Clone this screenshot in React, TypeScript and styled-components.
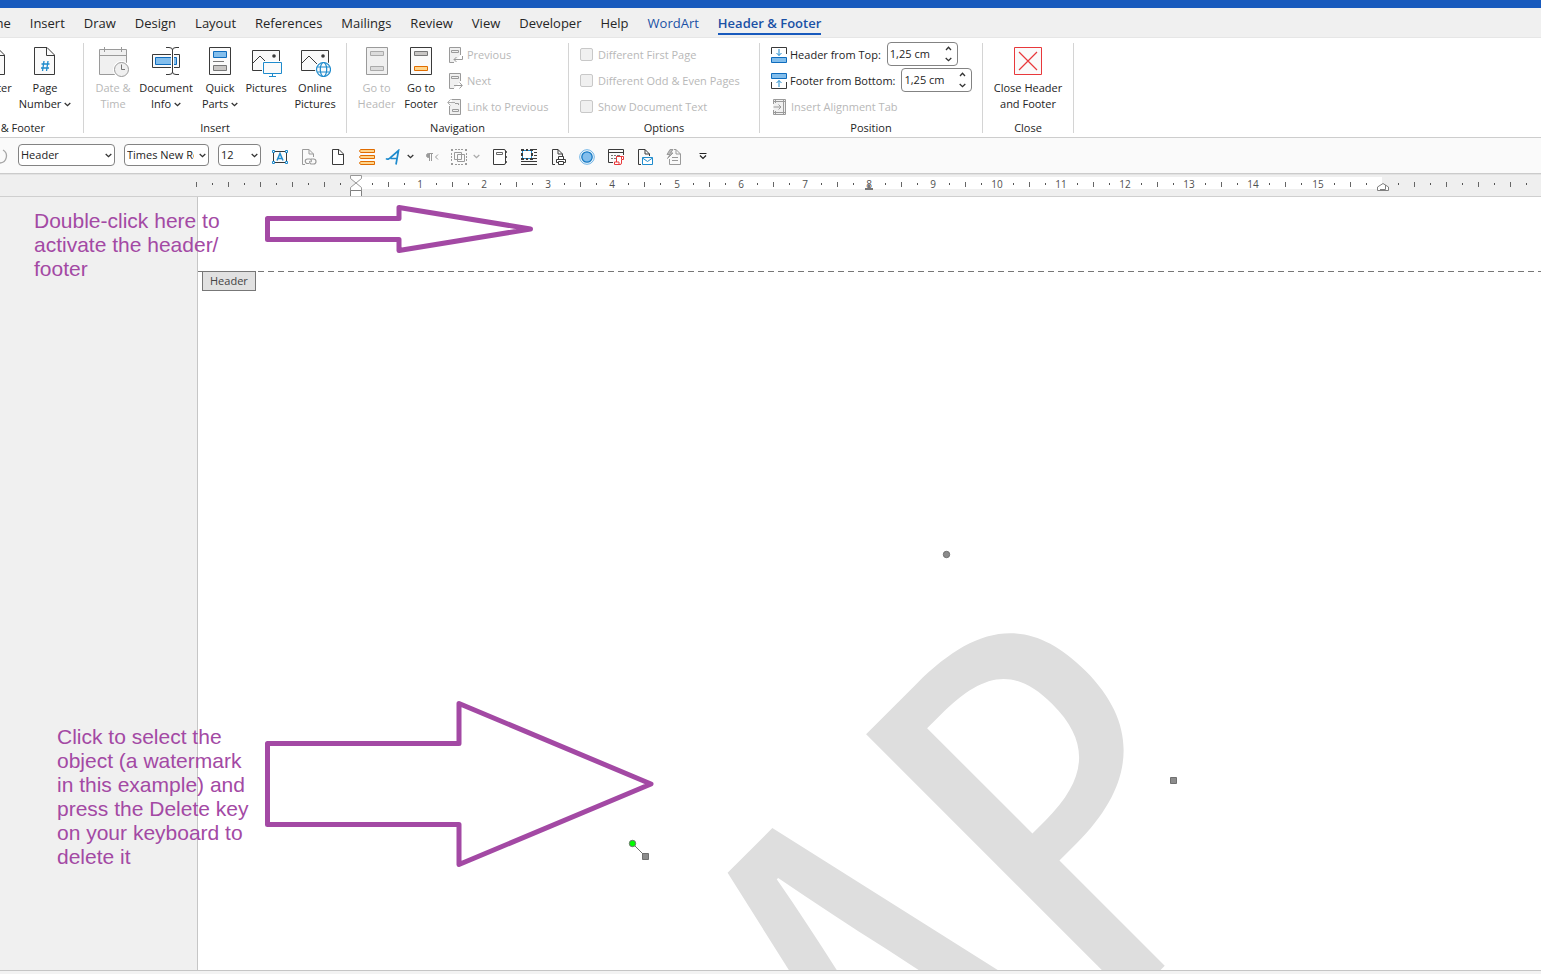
import React from 'react';
import styled, { createGlobalStyle } from 'styled-components';

const GlobalStyle = createGlobalStyle`
  *, *::before, *::after { box-sizing: border-box; }
  body { margin: 0; background: #fff; overflow: hidden; }
  button, input, select { font: inherit; color: inherit; }
  button { border: 0; padding: 0; background: none; }
`;

const Shell = styled.div`
  min-height: 100vh;
  display: flex;
  flex-direction: column;
  overflow: hidden;
  font-family: 'Open Sans', 'Noto Sans', sans-serif;
  font-size: 11px;
  line-height: 16px;
  color: #242424;
`;

const TitleBar = styled.div`
  height: 8px;
  background: #185abd;
`;

const TabStrip = styled.div`
  background: #f0f0f0;
  border-bottom: 1px solid #e6e6e6;
`;

const Tabs = styled.nav`
  display: flex;
  gap: 19px;
  height: 29px;
  margin-left: -26px;
`;

const Tab = styled.a<{ $tone?: 'accent' | 'active' }>`
  display: flex;
  flex: none;
  height: 27px;
  align-items: center;
  padding-top: 5px;
  font-size: 13px;
  white-space: nowrap;
  text-decoration: none;
  color: ${(p) => (p.$tone ? '#1a50a5' : '#262626')};
  font-weight: ${(p) => (p.$tone === 'active' ? 600 : 400)};
  border-bottom: 2px solid ${(p) => (p.$tone === 'active' ? '#185abd' : 'transparent')};
`;

const Ribbon = styled.div`
  display: flex;
  height: 100px;
  margin-left: -78px;
  padding-top: 5px;
  background: #fff;
  border-bottom: 1px solid #cdcdcd;
`;

const Group = styled.section<{ $width: number }>`
  display: flex;
  flex: none;
  flex-direction: column;
  width: ${(p) => p.$width}px;
  height: 90px;
  border-right: 1px solid #d4d4d4;
`;

const GroupBody = styled.div<{ $center?: boolean }>`
  display: flex;
  flex: none;
  justify-content: ${(p) => (p.$center ? 'center' : 'flex-start')};
  align-items: flex-start;
  height: 79px;
  padding-left: ${(p) => (p.$center ? 0 : 8)}px;
`;

const GroupName = styled.h2`
  margin: 0;
  font-size: 11px;
  line-height: 12px;
  font-weight: 400;
  text-align: center;
`;

const BigButton = styled.button<{ $width: number }>`
  display: flex;
  flex: none;
  flex-direction: column;
  align-items: center;
  width: ${(p) => p.$width}px;
  padding-top: 2px;
  white-space: nowrap;
  &:disabled { color: #b8b8b8; }
`;

const BigLabel = styled.span`
  margin-top: 3px;
  text-align: center;
  svg { vertical-align: 1px; }
`;

const Stack = styled.div`
  display: flex;
  flex: none;
  flex-direction: column;
  align-items: flex-start;
  margin: -1px 0 0 3px;
`;

const Line = styled.div`
  display: flex;
  flex: none;
  align-items: center;
  gap: 3px;
  height: 26px;
  white-space: nowrap;
`;

const SmallButton = styled.button`
  display: flex;
  flex: none;
  align-items: center;
  gap: 4px;
  height: 26px;
  white-space: nowrap;
  &:disabled { color: #b8b8b8; }
`;

const CheckLine = styled.label`
  display: flex;
  flex: none;
  align-items: center;
  gap: 5px;
  height: 26px;
  color: #b8b8b8;
  white-space: nowrap;
`;

const Check = styled.input`
  appearance: none;
  width: 13px;
  height: 13px;
  margin: 0 0 2px;
  border: 1px solid #c8c8c8;
  border-radius: 2px;
  background: #f0f0f0;
`;

const Spin = styled.span`
  display: flex;
  align-items: center;
  width: 71px;
  height: 24px;
  margin: 0 0 2px 3px;
  padding: 0 5px 0 2px;
  border: 1px solid #838383;
  border-radius: 4px;
  background: #fff;
`;

const SpinInput = styled.input`
  flex: 1;
  min-width: 0;
  border: 0;
  padding: 0;
  outline: 0;
  background: none;
`;

const SpinArrows = styled.span`
  display: flex;
  flex-direction: column;
  gap: 6px;
`;

const SpinButton = styled.button`
  display: flex;
`;

const Toolbar = styled.div`
  display: flex;
  align-items: center;
  height: 36px;
  background: #fafafa;
  border-bottom: 1px solid #cbcbcb;
`;

const Combo = styled.label<{ $width: number }>`
  position: relative;
  flex: none;
  width: ${(p) => p.$width}px;
  height: 22px;
  margin: 0 9px 2px 0;
  font-size: 11px;
`;

const ComboSelect = styled.select`
  appearance: none;
  width: 100%;
  height: 22px;
  padding: 0 14px 0 2px;
  border: 1px solid #838383;
  border-radius: 4px;
  background: #fff;
`;

const ComboArrow = styled.span`
  position: absolute;
  top: 9px;
  right: 3px;
  display: flex;
  pointer-events: none;
`;

const RedoButton = styled.button`
  display: flex;
  flex: none;
  width: 18px;
`;

const Tool = styled.button<{ $width?: number }>`
  display: flex;
  flex: none;
  align-items: center;
  justify-content: center;
  gap: 6px;
  width: ${(p) => p.$width ?? 29}px;
  height: 28px;
`;

const Tools = styled.div`
  display: flex;
  margin: 2px 0 0 -5px;
`;

const RulerBar = styled.div`
  height: 23px;
  overflow: hidden;
  background: #efefef;
  border-bottom: 1px solid #cfcfcf;
`;

const RulerText = styled.text`
  font-size: 10px;
  fill: #505050;
  text-anchor: middle;
`;

const Workspace = styled.main`
  position: relative;
  display: flex;
  flex: 1;
  overflow: hidden;
  background: #f0f0f0;
`;

const Gutter = styled.div`
  flex: none;
  width: 197px;
`;

const Page = styled.div`
  position: relative;
  flex: 1;
  overflow: hidden;
  background: #fff;
  border-left: 1px solid #c6c6c6;
`;

const HeaderArea = styled.div`
  height: 75px;
  background: repeating-linear-gradient(90deg, #777 0 6px, transparent 6px 10px) bottom left / 100% 1px no-repeat;
`;

const HeaderTag = styled.div`
  display: inline-flex;
  align-items: center;
  height: 20px;
  margin: -1px 0 0 4px;
  padding: 0 7px;
  border: 1px solid #777;
  background: #e1e1e1;
  font-size: 11px;
  color: #444;
  vertical-align: top;
`;

const Watermark = styled.div`
  position: absolute;
  left: 29px;
  top: 1032px;
  font-family: 'Noto Sans Mono CJK JP', 'Noto Sans CJK JP', sans-serif;
  font-feature-settings: 'hwid';
  font-size: 510px;
  line-height: 510px;
  white-space: nowrap;
  color: #dedede;
  transform-origin: 0 0;
  transform: rotate(-45deg);
`;

const Overlay = styled.svg`
  position: absolute;
  left: 0;
  top: 0;
  pointer-events: none;
`;

const Note = styled.p<{ $left: number; $top: number }>`
  position: absolute;
  left: ${(p) => p.$left}px;
  top: ${(p) => p.$top}px;
  margin: 0;
  font-family: 'Liberation Sans', sans-serif;
  font-size: 21px;
  line-height: 24px;
  white-space: nowrap;
  color: #a349a4;
`;

const StatusEdge = styled.footer`
  height: 4px;
  background: #f3f3f3;
  border-top: 1px solid #c6c6c6;
`;

const DARK = '#3a3a3a';
const GREY = '#9a9a9a';
const BLUE = '#1e8bcd';

const Chevron = ({ color = '#333', up = false }: { color?: string; up?: boolean }) => (
  <svg width="7" height="5" viewBox="0 0 7 5" fill="none" stroke={color} strokeWidth="1.3">
    <path d={up ? 'M1 4 3.5 1.3 6 4' : 'M.7 1 3.5 3.7 6.3 1'} />
  </svg>
);

const Icon = ({ w = 32, h = 32, children }: { w?: number; h?: number; children: React.ReactNode }) => (
  <svg width={w} height={h} viewBox={`0 0 ${w} ${h}`} fill="none" stroke={DARK}>
    {children}
  </svg>
);

const PageIcon = ({ mark }: { mark?: boolean }) => (
  <Icon>
    <path d="M5.500 2.500H18L25.500 10V29.500H5.500Z" fill="#fafafa" />
    <path d="M17.500 2.500V10.500H25.500" />
    {mark && <path d="M15 16 13.500 26M19 16 17.500 26M12.500 19H20.500M12 23H20" stroke={BLUE} strokeWidth="1.300" />}
  </Icon>
);

const CalendarIcon = () => (
  <Icon>
    <g stroke={GREY}>
      <path d="M2.500 4.500H29.500V29.500H2.500Z" fill="#f0f0f0" />
      <path d="M2.500 10.500H29.500M7.500 2V7M24.500 2V7" />
      <circle cx="24.500" cy="24.500" r="7" fill="#f0f0f0" stroke="#fff" strokeWidth="3" />
      <circle cx="24.500" cy="24.500" r="7" fill="#f0f0f0" />
      <path d="M24.500 19.500V24.500H28" stroke="#777" />
    </g>
  </Icon>
);

const DocInfoIcon = () => (
  <Icon>
    <path d="M2.500 9.500H29.500V22.500H2.500Z" fill="#fafafa" />
    <path d="M5.500 12.500H26.500V19.500H5.500Z" fill="#83beec" stroke="#0f6cbd" />
    <path d="M22.500 4V28" stroke="#fff" strokeWidth="3" />
    <path d="M16 2.500H19Q22.500 2.500 22.500 5V27Q22.500 29.500 19 29.500H16M29 2.500H26Q22.500 2.500 22.500 5M22.500 27Q22.500 29.500 26 29.500H29" />
  </Icon>
);

const QuickPartsIcon = () => (
  <Icon>
    <path d="M5.500 2.500H26.500V29.500H5.500Z" fill="#fafafa" />
    <path d="M9.500 6.500H22.500V12.500H9.500Z" fill="#83beec" stroke="#0f6cbd" />
    <path d="M9 16.500H20" stroke="#777" />
    <path d="M9.500 20.500H22.500V25.500H9.500Z" fill="#c8c6c4" stroke="#777" />
  </Icon>
);

const PictureIcon = ({ online }: { online?: boolean }) => (
  <Icon>
    <path d="M2.500 5.500H29.500V25.500H2.500Z" fill="#fafafa" />
    <path d="M2.500 18.500 10 11 19 20" />
    <circle cx="24" cy="11" r="1.800" fill={DARK} stroke="none" />
    {online ? (
      <g stroke={BLUE} strokeWidth="1.200">
        <circle cx="24.500" cy="24.500" r="8.500" fill="#fff" stroke="none" />
        <circle cx="24.500" cy="24.500" r="7" fill="#fafafa" />
        <ellipse cx="24.500" cy="24.500" rx="3.200" ry="7" />
        <path d="M18.300 22H30.700M18.300 27H30.700" />
      </g>
    ) : (
      <g stroke={BLUE}>
        <path d="M12 16H32V30H12Z" fill="#fff" stroke="none" />
        <path d="M13.500 17.500H31.500V28.500H13.500ZM22.500 28.500V31.500M19 31.500H26" fill="#fafafa" />
      </g>
    )}
  </Icon>
);

const GotoIcon = ({ footer }: { footer?: boolean }) => (
  <Icon>
    <path d="M5.500 2.500H26.500V29.500H5.500Z" fill={footer ? '#fafafa' : '#f0f0f0'} stroke={footer ? DARK : GREY} />
    <path d="M9.500 6.500H22.500V10.500H9.500Z" fill={footer ? '#c8c6c4' : '#dcdcdc'} stroke={footer ? '#777' : '#aaa'} />
    <path d="M9.500 21.500H22.500V25.500H9.500Z" fill={footer ? '#ffd58c' : '#dcdcdc'} stroke={footer ? '#e06c00' : '#aaa'} />
  </Icon>
);

const CloseIcon = () => (
  <Icon>
    <path d="M2.500 2.500H29.500V29.500H2.500Z" fill="#fafafa" stroke="#e8383b" />
    <path d="M7 7 25 25M25 7 7 25" stroke="#e8383b" strokeWidth="1.200" />
  </Icon>
);

const NavIcon = ({ kind }: { kind: 'prev' | 'next' | 'link' }) => (
  <Icon w={16} h={18}>
    <g stroke={GREY}>
      {kind === 'link' ? (
        <>
          <path d="M5.500 1.500H13.500V16.500H2.500V8" fill="#f0f0f0" stroke="none" />
          <path d="M4.500 1.500H13.500V16.500H2.500V8" />
          <path d="M5.500 11.500H11.500V13.500H5.500ZM8 5.500H11.500V7" />
          <path d="M8 4.500H1M3.500 1.500 .7 4.500 3.500 7.500" stroke="#aaa" />
        </>
      ) : (
        <>
          <path d="M7 16.500H2.500V1.500H13.500V9" fill="#f0f0f0" />
          <path d="M4.500 4.500H11.500V6.500H4.500Z" />
          {kind === 'prev' ? <path d="M15.500 10V13.500H7M9.500 11 7 13.500 9.500 16" /> : <path d="M7 13.500H15M12.500 10.500 15.300 13.500 12.500 16.500" />}
        </>
      )}
    </g>
  </Icon>
);

const MarginIcon = ({ bottom }: { bottom?: boolean }) => (
  <Icon w={16} h={16}>
    {bottom ? (
      <>
        <path d="M.5 .5H15.500V5.500H.5Z" fill="#83beec" stroke="#0f6cbd" />
        <path d="M.5 9V15.500H15.500V9" />
        <path d="M8 14V7.500M5.500 10 8 7.500 10.500 10" stroke={BLUE} />
      </>
    ) : (
      <>
        <path d="M.5 10.500H15.500V15.500H.5Z" fill="#83beec" stroke="#0f6cbd" />
        <path d="M.5 7V.5H15.500V7" />
        <path d="M8 2V8.500M5.500 6 8 8.500 10.500 6" stroke={BLUE} />
      </>
    )}
  </Icon>
);

const AlignTabIcon = () => (
  <Icon w={16} h={16}>
    <g stroke={GREY}>
      <path d="M2.500 5V.5H14.500V15.500H2.500V11" fill="#f0f0f0" />
      <path d="M4.500 .5V4M4.500 12V15.500M12.500 .5V15.500M2.500 2.500H14.500M2.500 13.500H14.500" />
      <path d="M2.500 8H10M7.500 5.500 10 8 7.500 10.500" />
    </g>
  </Icon>
);

const toolIcons: { name: string; width?: number; menu?: string; art: React.ReactNode }[] = [
  {
    name: 'Text box',
    art: (
      <>
        <path d="M2 2.500H14M2 13.500H14M1.500 3V13M14.500 3V13" />
        <g stroke={BLUE} fill="#fff">
          <path d="M.5 1.500H2.500V3.500H.5ZM13.500 1.500H15.500V3.500H13.500ZM.5 12.500H2.500V14.500H.5ZM13.500 12.500H15.500V14.500H13.500Z" />
          <path d="M5 11.500 8 4.500 11 11.500M6 9.500H10" fill="none" strokeWidth="1.500" />
        </g>
      </>
    ),
  },
  {
    name: 'Link document',
    art: (
      <g stroke={GREY}>
        <path d="M4 15.500H1.500V.5H8L12.500 5V8M8 .5V5H12.500" />
        <path d="M8 14.500H6.500A2 2 0 0 1 6.500 10H9A2 2 0 0 1 10 13M10 10H12.500A2 2 0 0 1 12.500 15H10A2 2 0 0 1 9 12" strokeWidth="1.200" />
      </g>
    ),
  },
  { name: 'New', art: <path d="M2.500 .5H9L13.500 5V15.500H2.500ZM8.500 .5V5.500H13.500" fill="#fff" /> },
  {
    name: 'Lines',
    art: <path d="M1.500 .5H15.500V3.500H1.500L.5 2ZM1.500 6.500H15.500V9.500H1.500L.5 8ZM1.500 12.500H15.500V15.500H1.500L.5 14Z" fill="#ffd58c" stroke="#e06c00" />,
  },
  { name: 'WordArt', width: 36, menu: '#333', art: <path d="M1 9.500Q3 11.500 6 8L13.500 1.500 11 15.500M5.500 9.500H12" stroke={BLUE} strokeWidth="1.700" /> },
  {
    name: 'Right to left',
    art: (
      <g stroke={GREY}>
        <path d="M5.500 4V12M7.500 4V12M9 4.500H5" />
        <path d="M5.500 4.500H4.500A2 2 0 0 0 4.500 8.500H5.500Z" fill={GREY} />
        <path d="M14 5.500 11.500 8 14 10.500" />
      </g>
    ),
  },
  {
    name: 'Group',
    width: 39,
    menu: '#aaa',
    art: (
      <g stroke={GREY}>
        <path d="M3.500 3.500H10.500V10.500H3.500ZM6.500 5.500H13.500V12.500H6.500Z" />
        <path d="M4 .5H12M4 15.500H12M.5 4V12M15.500 4V12" strokeDasharray="2 1" />
        <path d="M0 0H2V2H0ZM14 0H16V2H14ZM0 14H2V16H0ZM14 14H16V16H14Z" fill={GREY} stroke="none" />
      </g>
    ),
  },
  { name: 'Notebook', art: <><path d="M1.500 .5H12Q13.500 .5 13.500 2V14Q13.500 15.500 12 15.500H1.500Z" fill="#fff" /><path d="M4.500 3.500H10.500V5.500H4.500Z" stroke="#666" /><path d="M14 2V4M14 7V9M14 12V14" strokeWidth="1.500" /></> },
  {
    name: 'Wrap text',
    art: (
      <>
        <path d="M12 .5H16M13 3.500H16M13 6.500H16M12 9.500H16M0 12.500H16M0 15.500H16" />
        <path d="M1.500 1.500H10.500V9.500H1.500Z" stroke={BLUE} fill="#fff" />
        <path d="M0 0H3V2H0ZM5 0H7V2H5ZM9 0H12V2H9ZM0 9H3V11H0ZM5 9H7V11H5ZM9 9H12V11H9ZM0 4H2V7H0ZM10 4H12V7H10Z" fill={DARK} stroke="none" />
      </>
    ),
  },
  {
    name: 'Print',
    art: (
      <>
        <path d="M5 15.500H2.500V.5H8L12.500 5V7M8 .5V5H12.500" />
        <path d="M8.500 10V7.500H13.500V10M8.500 13.500H6.500V10.500H15.500V13.500H13.500M8.500 12.500H13.500V15.500H8.500Z" fill="#fff" />
      </>
    ),
  },
  { name: 'Record', art: <><circle cx="8" cy="8" r="7.300" stroke="#6db3e6" /><circle cx="8" cy="8" r="5.200" fill="#83beec" stroke="#1479c4" strokeWidth="1.300" /></> },
  {
    name: 'Script',
    art: (
      <>
        <path d="M5 13.500H.5V.5H15.500V6M.5 3.500H15.500" />
        <path d="M3 6.500H5M3 9.500H5M6 6.500H8M6 9.500H8M9 6.500H12" stroke="#777" />
        <path d="M8.500 13V7.500H15.500V10.500H13.500V14A1.500 1.500 0 0 1 12 15.500H6.500V13H11V15.500M8.500 7.500H13.500V10" stroke="#e8383b" fill="#fff" />
      </>
    ),
  },
  {
    name: 'Email',
    art: (
      <>
        <path d="M4 15.500H1.500V.5H8L12.500 5V7M8 .5V5H12.500" />
        <path d="M5.500 8.500H15.500V15.500H5.500ZM5.500 9 10.500 12.500 15.500 9" stroke={BLUE} fill="#fff" />
      </>
    ),
  },
  {
    name: 'Quick edit',
    art: (
      <g stroke={GREY}>
        <path d="M3.500 10V15.500H14.500V5L10 .5H8M10 .5V5H14.500" />
        <path d="M6 8.500H12M6 11.500H12" />
        <path d="M4 .5 1 5.500H4L1.500 9.500 7 4H4.500L7 .5Z" fill="#bbb" />
      </g>
    ),
  },
  { name: 'Customize toolbar', art: <path d="M4.500 4.500H11.500M5 6.500 8 9.500 11 6.500" strokeWidth="1.200" stroke="#222" /> },
];

const ORIGIN = 356;
const CM = 64.1;
const WHITE_END = 1382;

const Ruler = () => {
  const marks: React.ReactNode[] = [];
  for (let q = -10; q < 200; q++) {
    const x = Math.round(ORIGIN + (q * CM) / 4);
    if (q === 0 || q === 64) continue;
    if (q % 4 === 0 && q > 0 && q < 64) {
      marks.push(<RulerText key={q} x={x} y="14">{q / 4}</RulerText>);
    } else if (q % 2 === 0) {
      marks.push(<path key={q} d={`M${x + 0.5} 8V13`} stroke="#666" />);
    } else {
      marks.push(<path key={q} d={`M${x + 0.5} 9V11`} stroke="#555" />);
    }
  }
  return (
    <RulerBar>
      <svg width="4000" height="23" fill="none">
        <path d="M0 .5H4000" stroke="#e2e2e2" />
        <path d={`M${ORIGIN} 3H${WHITE_END}V15H${ORIGIN}Z`} fill="#fff" />
        {marks}
        <g stroke="#808080" fill="#fff">
          <path d="M350.500 1.500H361.500V4.500L356 9 361.500 13.500V16.500H350.500V13.500L356 9 350.500 4.500Z" stroke="#999" />
          <path d="M350.500 16.500H361.500V22.500H350.500Z" />
          <path d="M1377.500 16.500V13L1383 9.500 1388.500 13V16.500Z" />
          <path d="M1380 15.500H1385.500V11" />
        </g>
        <path d="M865 15H873M869 11V15" stroke="#777" strokeWidth="2" />
      </svg>
    </RulerBar>
  );
};

const tabs: [string, ('accent' | 'active')?][] = [
  ['Home'], ['Insert'], ['Draw'], ['Design'], ['Layout'], ['References'], ['Mailings'], ['Review'],
  ['View'], ['Developer'], ['Help'], ['WordArt', 'accent'], ['Header & Footer', 'active'],
];

const Big = ({ width, icon, lines, menu, disabled }: { width: number; icon: React.ReactNode; lines: string[]; menu?: boolean; disabled?: boolean }) => (
  <BigButton $width={width} disabled={disabled}>
    {icon}
    <BigLabel>
      {lines[0]}
      {lines[1] && <><br />{lines[1]}</>}
      {menu && <> <Chevron /></>}
    </BigLabel>
  </BigButton>
);

const Distance = ({ id, label, bottom }: { id: string; label: string; bottom?: boolean }) => (
  <Line>
    <MarginIcon bottom={bottom} />
    <label htmlFor={id}>{label}</label>
    <Spin>
      <SpinInput id={id} defaultValue="1,25 cm" />
      <SpinArrows>
        <SpinButton aria-label="Increase"><Chevron up /></SpinButton>
        <SpinButton aria-label="Decrease"><Chevron /></SpinButton>
      </SpinArrows>
    </Spin>
  </Line>
);

const ComboBox = ({ width, value, name }: { width: number; value: string; name: string }) => (
  <Combo $width={width}>
    <ComboSelect aria-label={name}>
      <option>{value}</option>
    </ComboSelect>
    <ComboArrow><Chevron /></ComboArrow>
  </Combo>
);

export default function App() {
  return (
    <Shell>
      <GlobalStyle />
      <TitleBar />
      <TabStrip>
        <Tabs>
          {tabs.map(([name, tone]) => (
            <Tab key={name} href="#" $tone={tone}>{name}</Tab>
          ))}
        </Tabs>
      </TabStrip>
      <Ribbon>
        <Group $width={162}>
          <GroupBody>
            <Big width={46} icon={<PageIcon />} lines={['Header']} />
            <Big width={38} icon={<PageIcon />} lines={['Footer']} />
            <Big width={62} icon={<PageIcon mark />} lines={['Page', 'Number']} menu />
          </GroupBody>
          <GroupName>Header &amp; Footer</GroupName>
        </Group>
        <Group $width={263}>
          <GroupBody>
            <Big width={42} icon={<CalendarIcon />} lines={['Date &', 'Time']} disabled />
            <Big width={64} icon={<DocInfoIcon />} lines={['Document', 'Info']} menu />
            <Big width={44} icon={<QuickPartsIcon />} lines={['Quick', 'Parts']} menu />
            <Big width={48} icon={<PictureIcon />} lines={['Pictures']} />
            <Big width={50} icon={<PictureIcon online />} lines={['Online', 'Pictures']} />
          </GroupBody>
          <GroupName>Insert</GroupName>
        </Group>
        <Group $width={222}>
          <GroupBody>
            <Big width={43} icon={<GotoIcon />} lines={['Go to', 'Header']} disabled />
            <Big width={46} icon={<GotoIcon footer />} lines={['Go to', 'Footer']} />
            <Stack>
              <SmallButton disabled><NavIcon kind="prev" />Previous</SmallButton>
              <SmallButton disabled><NavIcon kind="next" />Next</SmallButton>
              <SmallButton disabled><NavIcon kind="link" />Link to Previous</SmallButton>
            </Stack>
          </GroupBody>
          <GroupName>Navigation</GroupName>
        </Group>
        <Group $width={191}>
          <GroupBody>
            <Stack>
              {['Different First Page', 'Different Odd & Even Pages', 'Show Document Text'].map((t) => (
                <CheckLine key={t}><Check type="checkbox" disabled />{t}</CheckLine>
              ))}
            </Stack>
          </GroupBody>
          <GroupName>Options</GroupName>
        </Group>
        <Group $width={223}>
          <GroupBody>
            <Stack>
              <Distance id="top" label="Header from Top:" />
              <Distance id="bottom" label="Footer from Bottom:" bottom />
              <SmallButton disabled><AlignTabIcon />Insert Alignment Tab</SmallButton>
            </Stack>
          </GroupBody>
          <GroupName>Position</GroupName>
        </Group>
        <Group $width={91}>
          <GroupBody $center>
            <Big width={80} icon={<CloseIcon />} lines={['Close Header', 'and Footer']} />
          </GroupBody>
          <GroupName>Close</GroupName>
        </Group>
      </Ribbon>
      <Toolbar>
        <RedoButton aria-label="Repeat">
          <svg width="18" height="16" fill="none" stroke="#a6a6a6" strokeWidth="1.300"><path d="M3 2A7 7 0 0 1 0 15" /></svg>
        </RedoButton>
        <ComboBox width={97} value="Header" name="Style" />
        <ComboBox width={85} value="Times New Roman" name="Font" />
        <ComboBox width={43} value="12" name="Font size" />
        <Tools>
          {toolIcons.map((t) => (
            <Tool key={t.name} aria-label={t.name} $width={t.width}>
              <Icon w={16} h={16}>{t.art}</Icon>
              {t.menu && <Chevron color={t.menu} />}
            </Tool>
          ))}
        </Tools>
      </Toolbar>
      <Ruler />
      <Workspace>
        <Gutter />
        <Page>
          <HeaderArea />
          <HeaderTag>Header</HeaderTag>
          <Watermark>ASAP</Watermark>
        </Page>
        <Overlay width="1200" height="700" fill="none">
          <g stroke="#a349a4" strokeWidth="5" strokeLinejoin="round">
            <path d="M267.500 21.500H399V10.500L530.500 32 399 53.500V42.500H267.500Z" />
            <path d="M267.500 546.500H459V506.500L651 587 459 667.500V627.500H267.500Z" />
          </g>
          <g stroke="#707070" fill="#8c8c8c">
            <path d="M632 646 645 659" />
            <circle cx="946.500" cy="357.500" r="3.200" />
            <path d="M1170.500 580.500H1176.500V586.500H1170.500ZM642.500 656.500H648.500V662.500H642.500Z" />
            <circle cx="632.500" cy="646.500" r="3.200" fill="#0f0" />
          </g>
        </Overlay>
        <Note $left={34} $top={12}>Double-click here to<br />activate the header/<br />footer</Note>
        <Note $left={57} $top={528}>Click to select the<br />object (a watermark<br />in this example) and<br />press the Delete key<br />on your keyboard to<br />delete it</Note>
      </Workspace>
      <StatusEdge />
    </Shell>
  );
}
